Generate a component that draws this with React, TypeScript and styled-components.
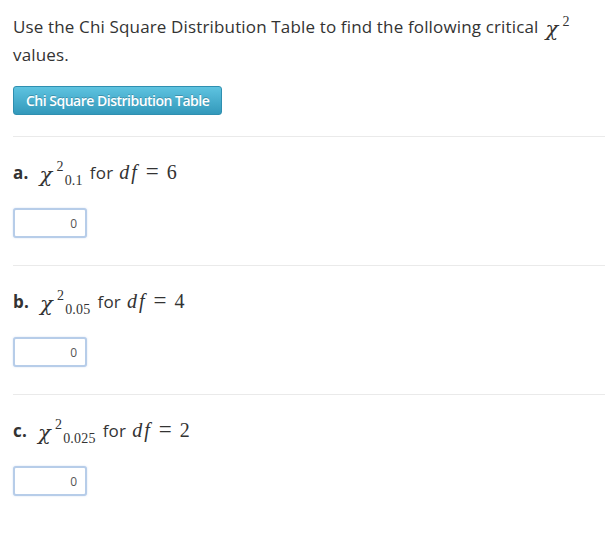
import React from "react";
import styled, { createGlobalStyle } from "styled-components";

const serif = `"Liberation Serif", "Times New Roman", Tinos, "DejaVu Serif", serif`;

const GlobalStyle = createGlobalStyle`
  html, body {
    margin: 0;
    padding: 0;
    background: #fff;
  }
  body {
    font-family: "Open Sans", "Liberation Sans", sans-serif;
    color: #333;
  }
`;

const Page = styled.div`
  padding: 13px 0 0 13px;
  width: 592px;
`;

const Intro = styled.p`
  margin: 0;
  font-size: 17px;
  line-height: 28px;
  letter-spacing: 0.15px;
`;

const InfoButton = styled.button`
  display: block;
  margin-top: 17px;
  height: 29px;
  padding: 0 12px;
  font-family: "Open Sans", "Liberation Sans", sans-serif;
  font-size: 14px;
  font-weight: 600;
  letter-spacing: -0.5px;
  color: #fff;
  border: 1px solid #2f8fb0;
  border-radius: 3px;
  background: linear-gradient(to bottom, #5ec3e0, #3399bb);
  text-shadow: 0 -1px 0 rgba(0, 0, 0, 0.2);
  cursor: pointer;
`;

const Question = styled.section<{ $first?: boolean }>`
  display: flex;
  flex-direction: column;
  align-items: flex-start;
  gap: 23px;
  border-top: 1px solid #eaeaea;
  margin-top: ${({ $first }) => ($first ? "21px" : "0")};
  padding-top: 24px;
  padding-bottom: 27px;
`;

const Prompt = styled.div`
  height: 24px;
  line-height: 24px;
  font-size: 17px;
  letter-spacing: 0.2px;
  white-space: nowrap;
`;

const Letter = styled.b`
  font-weight: 700;
  margin-right: 11px;
`;

const Chi = styled.span<{ $lead?: number }>`
  font-family: "DejaVu Serif", ${serif};
  font-style: italic;
  font-size: 21px;
  line-height: 0;
  vertical-align: -3px;
  margin-left: ${({ $lead }) => $lead ?? 0}px;
`;

const Sup = styled.span<{ $raise: number }>`
  font-family: ${serif};
  font-size: 14px;
  line-height: 0;
  vertical-align: ${({ $raise }) => $raise}px;
  margin-left: 4px;
`;

const Sub = styled.span`
  font-family: ${serif};
  font-size: 14px;
  line-height: 0;
  vertical-align: -6px;
  margin: 0 7px 0 1px;
`;

const Formula = styled.span`
  font-family: ${serif};
  font-size: 20px;
  margin-left: 6px;
  letter-spacing: 0;
  line-height: 0;
`;

const Var = styled.i`
  font-style: italic;
  letter-spacing: 2px;
`;

const Eq = styled.span`
  font-size: 23px;
  margin: 0 8px 0 7px;
`;

const AnswerInput = styled.input`
  box-sizing: border-box;
  width: 74px;
  height: 30px;
  padding: 0 8px;
  text-align: right;
  font-family: "Open Sans", "Liberation Sans", sans-serif;
  font-size: 12px;
  color: #555;
  border: 2px solid #b7cde9;
  border-radius: 3px;
  box-shadow: 0 0 2px rgba(120, 160, 215, 0.35);
  outline: none;
`;

const questions = [
  { letter: "a.", alpha: "0.1", df: "6" },
  { letter: "b.", alpha: "0.05", df: "4" },
  { letter: "c.", alpha: "0.025", df: "2" },
];

export default function App() {
  return (
    <Page>
      <GlobalStyle />
      <Intro>
        Use the Chi Square Distribution Table to find the following critical
        <Chi $lead={7}>χ</Chi>
        <Sup $raise={7}>2</Sup>
        <br />
        values.
      </Intro>
      <InfoButton>Chi Square Distribution Table</InfoButton>
      {questions.map((q, i) => (
        <Question key={q.letter} $first={i === 0}>
          <Prompt>
            <Letter>{q.letter}</Letter>
            <Chi>χ</Chi>
            <Sup $raise={8}>2</Sup>
            <Sub>{q.alpha}</Sub>
            for
            <Formula>
              <Var>df</Var>
              <Eq>=</Eq>
              {q.df}
            </Formula>
          </Prompt>
          <AnswerInput defaultValue="0" />
        </Question>
      ))}
    </Page>
  );
}
